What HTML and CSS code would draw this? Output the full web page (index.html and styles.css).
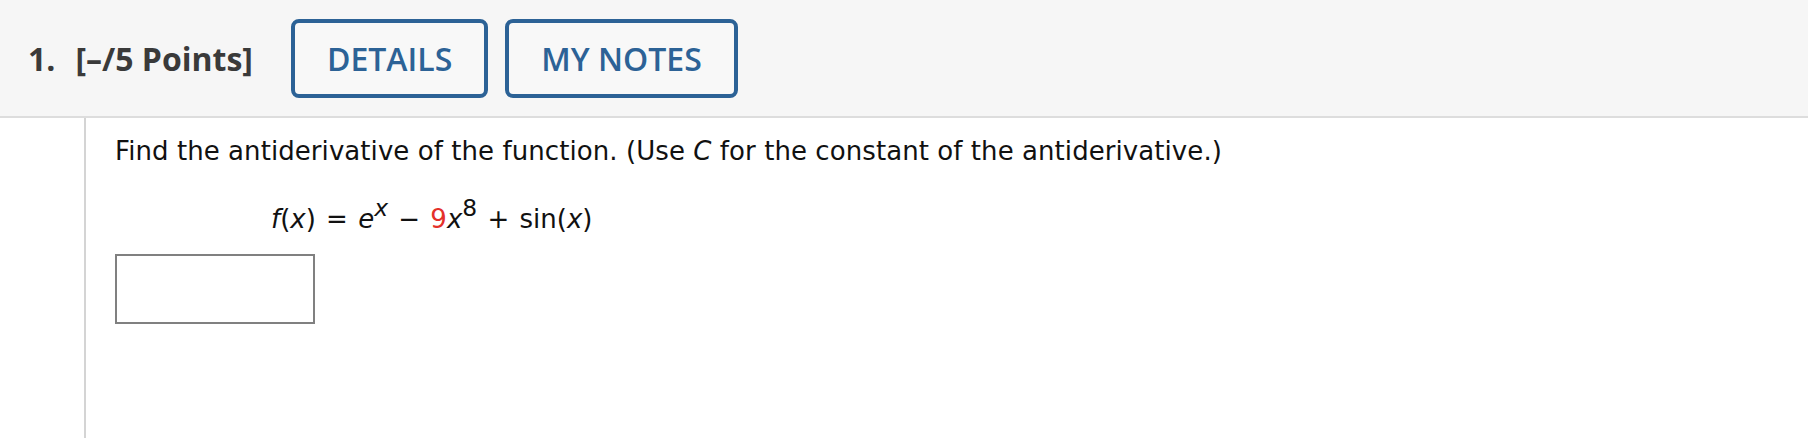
FILE: index.html
```html
<!DOCTYPE html>
<html>
<head>
<meta charset="utf-8">
<link rel="stylesheet" href="styles.css">
</head>
<body>
<div class="header">
  <div class="title"><span class="num">1.</span><span class="pts">[–/5 Points]</span></div>
  <div class="buttons">
    <button class="btn">DETAILS</button>
    <button class="btn">MY NOTES</button>
  </div>
</div>
<div class="body">
  <div class="rail"></div>
  <div class="content">
    <p class="question">Find the antiderivative of the function. (Use <i>C</i> for the constant of the antiderivative.)</p>
    <p class="formula"><i>f</i>(<i>x</i>) = <i>e</i><sup><i>x</i></sup> − <span class="red">9</span><i>x</i><sup>8</sup> + sin(<i>x</i>)</p>
    <div class="answer"></div>
  </div>
</div>
</body>
</html>
```
FILE: styles.css
```css
html, body {
  margin: 0;
  padding: 0;
  background: #ffffff;
}
body {
  width: 1808px;
  height: 438px;
  overflow: hidden;
}
.header {
  height: 116px;
  background: #f6f6f6;
  border-bottom: 2px solid #dddddd;
  display: flex;
  align-items: center;
  padding-left: 28px;
  box-sizing: content-box;
}
.title {
  font-family: "Open Sans", sans-serif;
  font-weight: 700;
  font-size: 32px;
  color: #3a3a3a;
  display: flex;
  gap: 20px;
}
.buttons {
  display: flex;
  gap: 17px;
  margin-left: 38px;
}
.btn {
  font-family: "Open Sans", sans-serif;
  font-weight: 600;
  font-size: 32px;
  color: #2c6296;
  background: #f8f8f8;
  border: 4px solid #2c6296;
  border-radius: 8px;
  height: 79px;
  padding: 0 32px;
  margin: 0;
}
.body {
  display: flex;
  height: 320px;
}
.rail {
  width: 84px;
  border-right: 2px solid #d4d4d4;
  flex: none;
}
.content {
  padding-left: 29px;
  font-family: "DejaVu Sans", Verdana, sans-serif;
  font-size: 26px;
  color: #111111;
}
.question {
  margin: 18px 0 0 0;
  line-height: 30px;
  letter-spacing: 0.07px;
}
.formula {
  margin: 38px 0 0 156px;
  line-height: 30px;
  word-spacing: 2px;
}
.formula sup {
  font-size: 0.9em;
  line-height: 0;
  vertical-align: 0.5em;
}
.red {
  color: #e4302a;
}
.answer {
  margin-top: 20px;
  width: 196px;
  height: 66px;
  border: 2px solid #808080;
}
```
